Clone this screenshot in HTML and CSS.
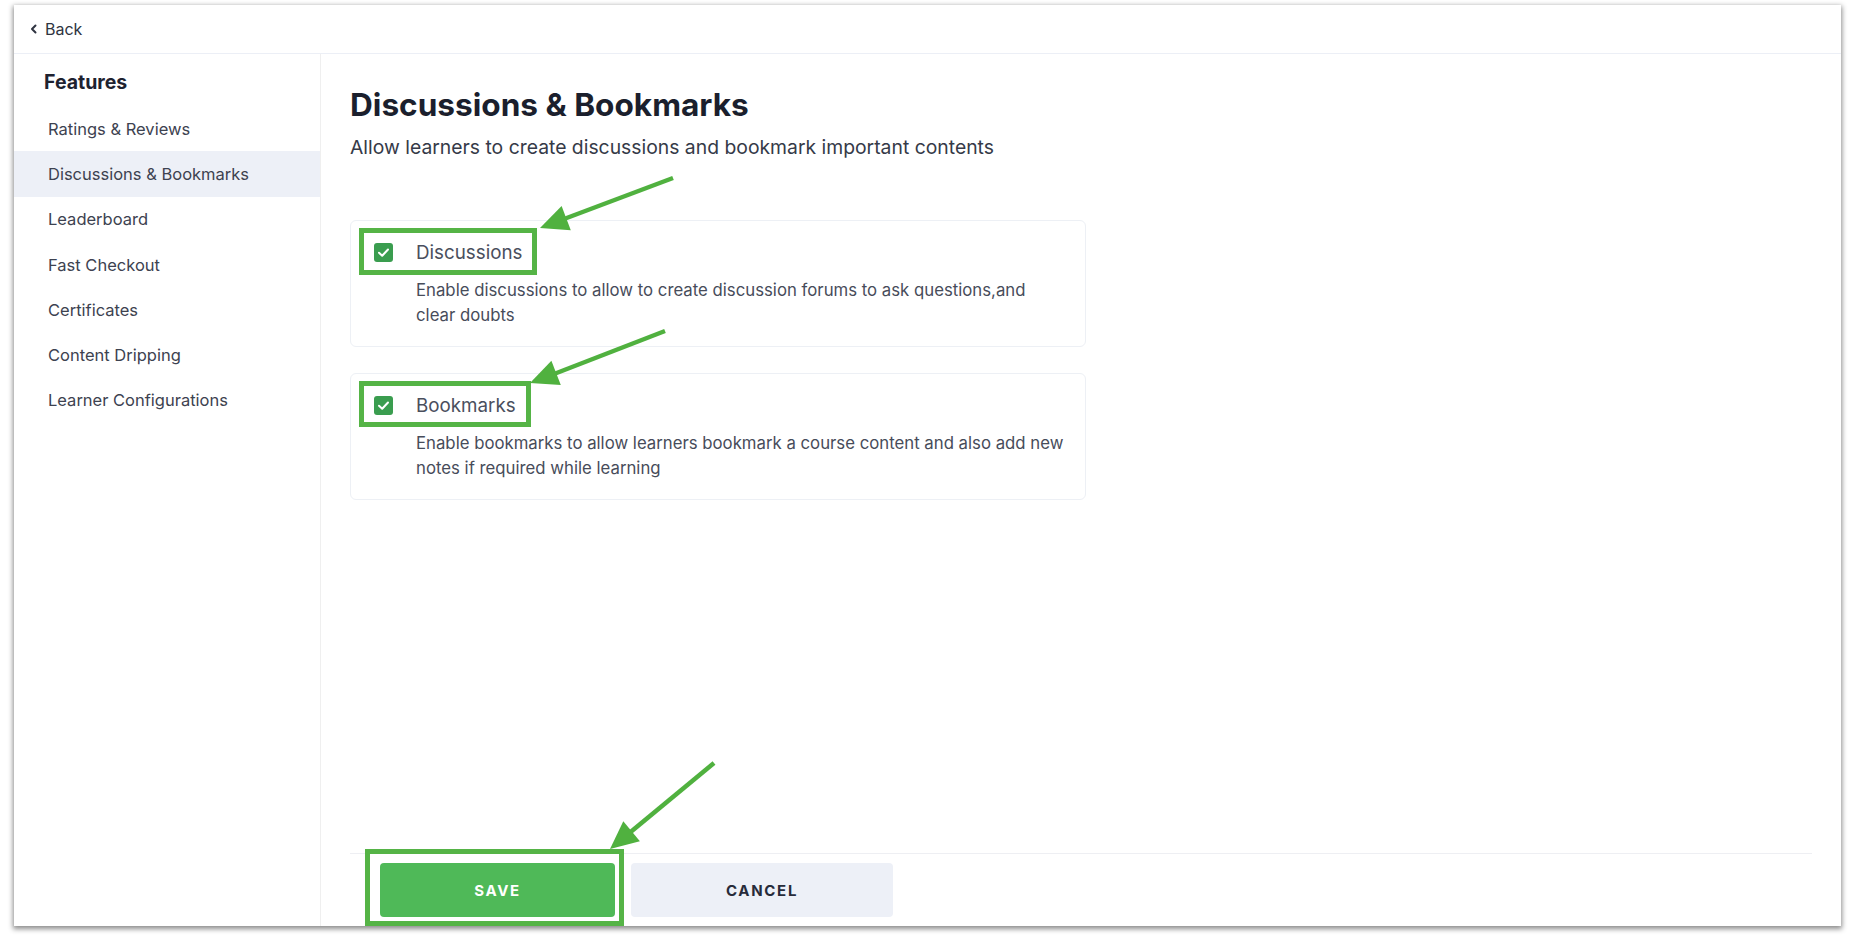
FILE: index.html
```html
<!DOCTYPE html>
<html lang="en">
<head>
<meta charset="utf-8">
<title>Discussions &amp; Bookmarks</title>
<link rel="stylesheet" href="styles.css">
</head>
<body>
<div class="window">
  <header class="topbar">
    <a class="back">
      <svg class="chev" width="8" height="10" viewBox="0 0 8 10"><polyline points="5.5,1.5 2,5 5.5,8.5"/></svg>
      <span>Back</span>
    </a>
  </header>
  <div class="main">
    <aside class="sidebar">
      <div class="side-title">Features</div>
      <nav class="side-nav">
        <div class="side-item">Ratings &amp; Reviews</div>
        <div class="side-item active">Discussions &amp; Bookmarks</div>
        <div class="side-item">Leaderboard</div>
        <div class="side-item">Fast Checkout</div>
        <div class="side-item">Certificates</div>
        <div class="side-item">Content Dripping</div>
        <div class="side-item">Learner Configurations</div>
      </nav>
    </aside>
    <section class="content">
      <h1 class="title">Discussions &amp; Bookmarks</h1>
      <p class="subtitle">Allow learners to create discussions and bookmark important contents</p>
      <div class="options">
        <div class="option">
          <div class="option-head">
            <span class="checkbox"><svg width="19" height="19" viewBox="0 0 19 19"><polyline points="5,9.8 8.2,12.8 14,6.5"/></svg></span>
            <span class="option-label">Discussions</span>
          </div>
          <p class="option-desc">Enable discussions to allow to create discussion forums to ask questions,and clear doubts</p>
        </div>
        <div class="option">
          <div class="option-head">
            <span class="checkbox"><svg width="19" height="19" viewBox="0 0 19 19"><polyline points="5,9.8 8.2,12.8 14,6.5"/></svg></span>
            <span class="option-label">Bookmarks</span>
          </div>
          <p class="option-desc">Enable bookmarks to allow learners bookmark a course content and also add new notes if required while learning</p>
        </div>
      </div>
      <footer class="actions">
        <button class="btn btn-save">SAVE</button>
        <button class="btn btn-cancel">CANCEL</button>
      </footer>
    </section>
  </div>
</div>
<svg class="annotations" width="1860" height="938" viewBox="0 0 1860 938">
  <g class="anno-box">
    <rect x="361.5" y="230.5" width="173" height="42"/>
    <rect x="361.5" y="383.5" width="167" height="41"/>
    <rect x="367.5" y="851.5" width="254" height="72"/>
  </g>
  <g class="anno-line">
    <line x1="673" y1="178" x2="564" y2="219"/>
    <line x1="665" y1="331" x2="554" y2="374"/>
    <line x1="714" y1="763" x2="630" y2="832.5"/>
  </g>
  <g class="anno-head">
    <polygon points="540,228 561.6,205.9 570.8,230.3"/>
    <polygon points="530,383 551.4,360.8 560.8,385"/>
    <polygon points="610,849 623.3,821.2 639.9,841.2"/>
  </g>
</svg>
</body>
</html>
```

FILE: styles.css
```css
* { box-sizing: border-box; }

html, body {
  margin: 0;
  padding: 0;
}

body {
  position: relative;
  width: 1860px;
  height: 938px;
  overflow: hidden;
  background: #ffffff;
  font-family: Inter, Roboto, "Liberation Sans", Arial, sans-serif;
  color: #3f4452;
}

.window {
  margin: 5px 0 0 14px;
  width: 1827px;
  height: 921px;
  background: #ffffff;
  display: flex;
  flex-direction: column;
  box-shadow: 0 2px 5px 1px rgba(0, 0, 0, 0.45);
}

/* top bar */
.topbar {
  height: 49px;
  flex: 0 0 49px;
  border-bottom: 1px solid #eceff6;
  display: flex;
  align-items: center;
  padding-left: 16px;
}

.back {
  display: flex;
  align-items: center;
  gap: 7px;
  font-size: 16px;
  color: #2f3441;
  cursor: pointer;
  padding-bottom: 1px;
}

.chev polyline {
  fill: none;
  stroke: #2f3441;
  stroke-width: 2;
  stroke-linecap: round;
  stroke-linejoin: round;
}

/* main */
.main {
  flex: 1;
  display: flex;
  min-height: 0;
}

.sidebar {
  width: 307px;
  flex: 0 0 307px;
  border-right: 1px solid #efefef;
  padding-top: 16px;
}

.side-title {
  font-size: 19.5px;
  font-weight: 700;
  line-height: 24px;
  color: #1e2230;
  padding-left: 30px;
  margin-bottom: 12px;
}

.side-item {
  height: 45.3px;
  display: flex;
  align-items: center;
  padding-left: 34px;
  font-size: 16.5px;
  color: #3d4250;
}

.side-item.active {
  background: #edf0f7;
}

/* content */
.content {
  flex: 1;
  display: flex;
  flex-direction: column;
  padding: 32px 29px 0 29px;
}

.title {
  margin: 0;
  font-size: 31.6px;
  line-height: 38px;
  font-weight: 700;
  color: #1b1f2d;
}

.subtitle {
  margin: 10px 0 0;
  font-size: 19.35px;
  line-height: 26px;
  color: #353a48;
}

.options {
  margin-top: 60px;
  display: flex;
  flex-direction: column;
  gap: 26px;
}

.option {
  width: 736px;
  border: 1px solid #edf0f5;
  border-radius: 6px;
  padding: 16px 19px 18px 23px;
}

.option-head {
  height: 30px;
  display: flex;
  align-items: center;
  gap: 23px;
}

.checkbox {
  width: 19px;
  height: 19px;
  flex: 0 0 19px;
  border-radius: 3px;
  background: #3a9d4f;
  display: block;
}

.checkbox svg {
  display: block;
}

.checkbox polyline {
  fill: none;
  stroke: #ffffff;
  stroke-width: 2;
  stroke-linecap: round;
  stroke-linejoin: round;
}

.option-label {
  font-size: 18.8px;
  color: #4a4f5d;
}

.option-desc {
  margin: 11px 0 0;
  padding-left: 42px;
  font-size: 16.75px;
  line-height: 25px;
  color: #474c5a;
}

/* footer */
.actions {
  margin-top: auto;
  border-top: 1px solid #eeeff3;
  padding: 9px 0 9px 30px;
  display: flex;
  gap: 16px;
}

.btn {
  height: 54px;
  border: none;
  border-radius: 4px;
  font-family: Inter, Roboto, "Liberation Sans", Arial, sans-serif;
  font-size: 15px;
  font-weight: 700;
  letter-spacing: 1.7px;
  cursor: pointer;
}

.btn-save {
  width: 235px;
  background: #4fb958;
  color: #ffffff;
}

.btn-cancel {
  width: 262px;
  background: #edf0f7;
  color: #272b3a;
}

/* annotation overlay */
.annotations {
  position: absolute;
  left: 0;
  top: 0;
  pointer-events: none;
}

.anno-box rect {
  fill: none;
  stroke: #55b446;
  stroke-width: 5;
}

.anno-line line {
  stroke: #50b13f;
  stroke-width: 4.5;
  stroke-linecap: butt;
}

.anno-head polygon {
  fill: #50b13f;
}
```
